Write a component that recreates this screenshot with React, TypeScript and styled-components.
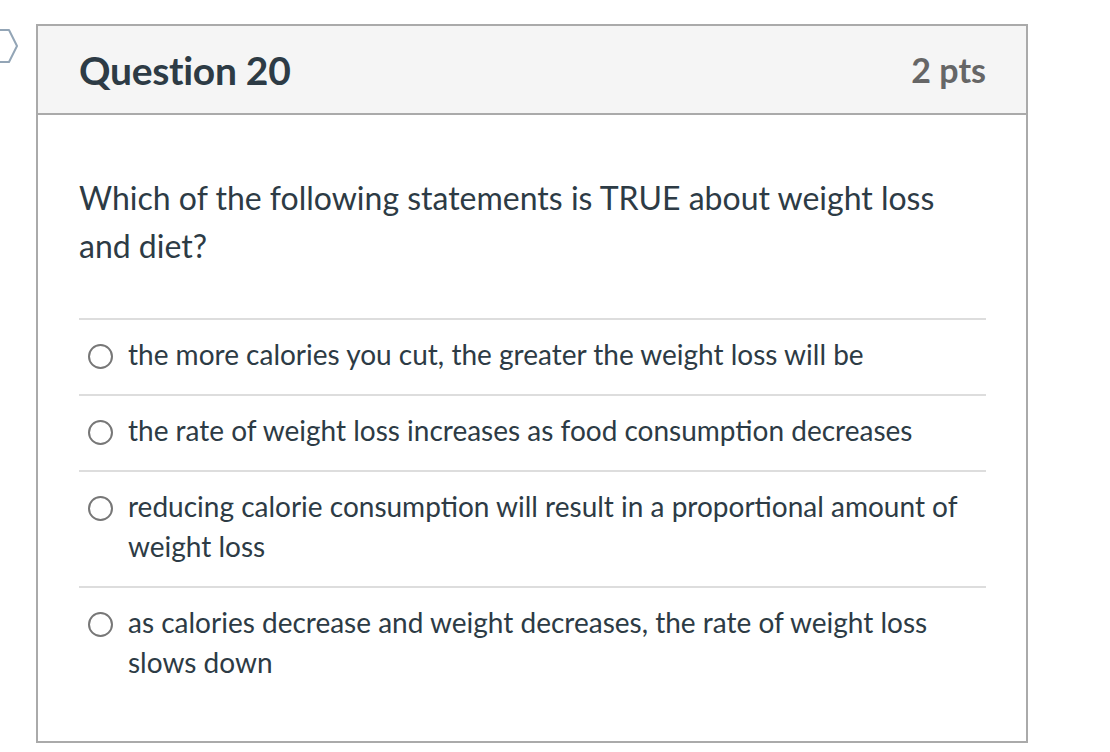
import styled, { createGlobalStyle } from "styled-components";

const GlobalStyle = createGlobalStyle`
  html, body {
    margin: 0;
    padding: 0;
    background: #ffffff;
  }
  body {
    font-family: Lato, "Open Sans", sans-serif;
    color: #2d3b45;
  }
`;

const Page = styled.div`
  display: flex;
  align-items: flex-start;
  padding-top: 24px;
  width: 1110px;
  height: 752px;
  box-sizing: border-box;
  overflow: hidden;
`;

const MarkerColumn = styled.div`
  width: 36px;
  flex: none;
  padding-top: 4px;
  svg {
    display: block;
  }
`;

const Panel = styled.section`
  width: 992px;
  height: 719px;
  box-sizing: border-box;
  border: 2px solid #aaaaaa;
  display: flex;
  flex-direction: column;
  overflow: hidden;
`;

const Header = styled.header`
  flex: none;
  display: flex;
  align-items: center;
  justify-content: space-between;
  height: 89px;
  box-sizing: border-box;
  padding: 0 40px 0 41px;
  background: #f5f5f5;
  border-bottom: 2px solid #aaaaaa;
`;

const Title = styled.h2`
  margin: 0;
  font-size: 39px;
  font-weight: 700;
  color: #2d3b45;
  letter-spacing: -0.3px;
`;

const Points = styled.span`
  font-size: 34px;
  font-weight: 700;
  color: #666666;
`;

const Body = styled.div`
  flex: 1;
  padding: 59px 40px 0 41px;
`;

const Prompt = styled.p`
  margin: 0 0 48px;
  font-size: 32px;
  line-height: 48px;
`;

const Answers = styled.ul`
  list-style: none;
  margin: 0;
  padding: 0;
  border-top: 2px solid #dddddd;
`;

const Answer = styled.li<{ $last?: boolean }>`
  display: flex;
  align-items: flex-start;
  padding: 14px 0 20px;
  border-bottom: ${(p) => (p.$last ? "none" : "2px solid #dddddd")};
`;

const Radio = styled.span`
  flex: none;
  width: 21px;
  height: 21px;
  margin: 10px 15px 0 9px;
  border: 2px solid #777777;
  border-radius: 50%;
`;

const AnswerText = styled.span`
  font-size: 28px;
  line-height: 40px;
`;

const answers = [
  "the more calories you cut, the greater the weight loss will be",
  "the rate of weight loss increases as food consumption decreases",
  "reducing calorie consumption will result in a proportional amount of weight loss",
  "as calories decrease and weight decreases, the rate of weight loss slows down",
];

export default function App() {
  return (
    <>
      <GlobalStyle />
      <Page>
        <MarkerColumn>
          <svg width="36" height="40" viewBox="0 0 36 40">
            <path
              d="M-4 2 H9 L17 18 L9 34 H-4"
              fill="none"
              stroke="#93a5b6"
              strokeWidth="2"
              strokeLinejoin="round"
            />
          </svg>
        </MarkerColumn>
        <Panel>
          <Header>
            <Title>Question 20</Title>
            <Points>2 pts</Points>
          </Header>
          <Body>
            <Prompt>Which of the following statements is TRUE about weight loss and diet?</Prompt>
            <Answers>
              {answers.map((a, i) => (
                <Answer key={i} $last={i === answers.length - 1}>
                  <Radio />
                  <AnswerText>{a}</AnswerText>
                </Answer>
              ))}
            </Answers>
          </Body>
        </Panel>
      </Page>
    </>
  );
}
